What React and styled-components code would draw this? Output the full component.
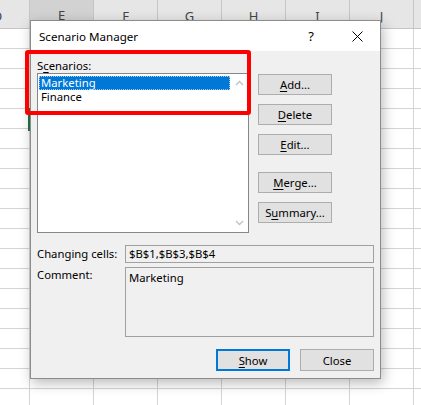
import React from "react"
import styled, { createGlobalStyle } from "styled-components"

const GlobalStyle = createGlobalStyle`
  html, body {
    margin: 0;
    padding: 0;
    background: #ffffff;
  }
  body {
    font-family: "Noto Sans", "Open Sans", sans-serif;
    font-size: 11.3px;
    color: #000000;
  }
`

const Page = styled.div`
  position: relative;
  width: 421px;
  height: 405px;
  overflow: hidden;
  background: #ffffff;
`

const HeaderRow = styled.div`
  display: flex;
  height: 29px;
  margin-left: -34px;
  background: #e6e6e6;
  border-bottom: 1px solid #c6c6c6;
  box-sizing: border-box;
`

const ColHeader = styled.div`
  flex: 0 0 64px;
  display: flex;
  align-items: center;
  justify-content: center;
  box-sizing: border-box;
  border-right: 1px solid #c6c6c6;
  background: ${props => (props.selected ? "#d2d2d2" : "#e6e6e6")};
  border-bottom: ${props => (props.selected ? "2px solid #217346" : "none")};
  color: #444444;
  font-size: 13px;
  padding-top: 4px;
`

const Sheet = styled.div`
  height: 376px;
  background-color: #ffffff;
  background-image: linear-gradient(to right, #d4d4d4 1px, transparent 1px),
    linear-gradient(to bottom, #d4d4d4 1px, transparent 1px);
  background-size: 64px 20px;
  background-position: 29px 19px;
`

const ActiveCell = styled.div`
  position: absolute;
  left: 28px;
  top: 108px;
  width: 66px;
  height: 23px;
  border: 2px solid #217346;
  box-sizing: border-box;
`

const Dialog = styled.div`
  position: absolute;
  left: 30px;
  top: 20px;
  width: 349px;
  display: flex;
  flex-direction: column;
  border: 1px solid #8c8c8c;
  background: #f0f0f0;
  box-shadow: 2px 4px 12px rgba(0, 0, 0, 0.28);
`

const TitleBar = styled.div`
  height: 30px;
  display: flex;
  align-items: center;
  background: #ffffff;
  padding-left: 8px;
  font-size: 11.6px;
`

const Title = styled.div`
  flex: 1;
`

const TitleButton = styled.div`
  width: ${props => props.w}px;
  display: flex;
  align-items: center;
  justify-content: center;
  font-size: 13px;
  height: 30px;
`

const Body = styled.div`
  display: flex;
  flex-direction: column;
  padding: 8px 6px 7px 6px;
`

const TopRow = styled.div`
  display: flex;
  gap: 9px;
`

const ListColumn = styled.div`
  width: 212px;
  display: flex;
  flex-direction: column;
`

const Label = styled.div`
  line-height: 14px;
  height: 14px;
  white-space: nowrap;
`

const Key = styled.span`
  text-decoration: underline;
  text-underline-offset: 2px;
`

const ListBox = styled.div`
  height: 160px;
  box-sizing: border-box;
  border: 1px solid #828790;
  background: #ffffff;
  display: flex;
`

const Items = styled.div`
  flex: 1;
  padding: 2px 1px;
`

const Item = styled.div`
  height: 14px;
  line-height: 14px;
  padding-left: 2px;
  box-sizing: border-box;
  background: ${props => (props.selected ? "#0078d7" : "transparent")};
  color: ${props => (props.selected ? "#ffffff" : "#000000")};
  outline: ${props => (props.selected ? "1px dotted #9fc9ef" : "none")};
  outline-offset: -1px;
`

const ScrollBar = styled.div`
  width: 17px;
  display: flex;
  flex-direction: column;
  justify-content: space-between;
  align-items: center;
  background: #ffffff;
  padding: 6px 0;
`

const ButtonColumn = styled.div`
  display: flex;
  flex-direction: column;
  padding-top: 15px;
`

const Button = styled.div`
  width: 74px;
  height: ${props => props.h || 21}px;
  box-sizing: border-box;
  margin-top: ${props => props.gap || 0}px;
  display: flex;
  align-items: center;
  justify-content: center;
  background: #e1e1e1;
  border: ${props => (props.primary ? "2px solid #0078d7" : "1px solid #adadad")};
`

const FieldRow = styled.div`
  display: flex;
  margin-top: ${props => props.gap}px;
`

const FieldLabel = styled.div`
  width: 88px;
  padding-top: ${props => props.pt || 0}px;
  line-height: 14px;
`

const Field = styled.div`
  flex: 1;
  height: ${props => props.h}px;
  box-sizing: border-box;
  border: 1px solid #a0a0a0;
  background: #f0f0f0;
  padding: ${props => props.pad};
  line-height: 14px;
`

const Footer = styled.div`
  display: flex;
  justify-content: flex-end;
  gap: 10px;
  margin-top: 12px;
`

const Highlight = styled.div`
  position: absolute;
  left: 25px;
  top: 50px;
  width: 226px;
  height: 65px;
  box-sizing: border-box;
  border: 4px solid #ff0000;
  border-radius: 3px;
`

const Chevron = ({ up }) => (
  <svg width="9" height="6" viewBox="0 0 9 6">
    <path
      d={up ? "M1 5 L4.5 1.5 L8 5" : "M1 1 L4.5 4.5 L8 1"}
      fill="none"
      stroke="#c2c2c2"
      strokeWidth="1.4"
    />
  </svg>
)

const CloseIcon = () => (
  <svg width="11" height="11" viewBox="0 0 11 11">
    <path d="M0.5 0.5 L10.5 10.5 M10.5 0.5 L0.5 10.5" stroke="#000" strokeWidth="1" />
  </svg>
)

const columns = ["D", "E", "F", "G", "H", "I", "J"]

const App = () => {
  return (
    <Page>
      <GlobalStyle />
      <HeaderRow>
        {columns.map(c => (
          <ColHeader key={c} selected={c === "E"}>
            {c}
          </ColHeader>
        ))}
      </HeaderRow>
      <Sheet />
      <ActiveCell />
      <Dialog>
        <TitleBar>
          <Title>Scenario Manager</Title>
          <TitleButton w={46}>?</TitleButton>
          <TitleButton w={46}>
            <CloseIcon />
          </TitleButton>
        </TitleBar>
        <Body>
          <TopRow>
            <ListColumn>
              <Label>
                S<Key>c</Key>enarios:
              </Label>
              <ListBox>
                <Items>
                  <Item selected>Marketing</Item>
                  <Item>Finance</Item>
                </Items>
                <ScrollBar>
                  <Chevron up />
                  <Chevron />
                </ScrollBar>
              </ListBox>
            </ListColumn>
            <ButtonColumn>
              <Button>
                <Key>A</Key>dd...
              </Button>
              <Button gap={9}>
                <Key>D</Key>elete
              </Button>
              <Button gap={9}>
                <Key>E</Key>dit...
              </Button>
              <Button gap={17}>
                <Key>M</Key>erge...
              </Button>
              <Button gap={9}>
                S<Key>u</Key>mmary...
              </Button>
            </ButtonColumn>
          </TopRow>
          <FieldRow gap={12}>
            <FieldLabel pt={2}>Changing cells:</FieldLabel>
            <Field h={18} pad="1px 3px">$B$1,$B$3,$B$4</Field>
          </FieldRow>
          <FieldRow gap={4}>
            <FieldLabel pt={1}>Comment:</FieldLabel>
            <Field h={70} pad="3px 3px">Marketing</Field>
          </FieldRow>
          <Footer>
            <Button primary h={22}>
              <Key>S</Key>how
            </Button>
            <Button h={22}>Close</Button>
          </Footer>
        </Body>
      </Dialog>
      <Highlight />
    </Page>
  )
}

export default App
